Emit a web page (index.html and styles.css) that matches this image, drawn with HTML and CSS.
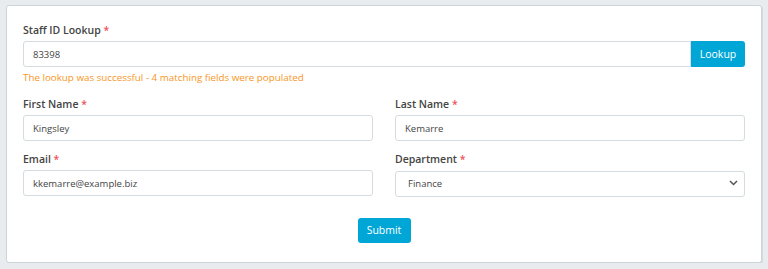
FILE: index.html
```html
<!DOCTYPE html>
<html lang="en">
<head>
    <meta charset="utf-8">
    <title>Staff Lookup</title>
    <link rel="stylesheet" href="styles.css">
</head>
<body>
    <div class="card">
        <form class="staff-form">
            <div class="form-group">
                <label for="staffId">Staff ID Lookup <span class="req">*</span></label>
                <div class="input-group">
                    <input type="text" id="staffId" value="83398">
                    <button type="button" class="btn">Lookup</button>
                </div>
                <div class="lookup-msg">The lookup was successful - 4 matching fields were populated</div>
            </div>
            <div class="form-row">
                <div class="form-group">
                    <label for="firstName">First Name <span class="req">*</span></label>
                    <input type="text" id="firstName" value="Kingsley">
                </div>
                <div class="form-group">
                    <label for="lastName">Last Name <span class="req">*</span></label>
                    <input type="text" id="lastName" value="Kemarre">
                </div>
            </div>
            <div class="form-row">
                <div class="form-group">
                    <label for="email">Email <span class="req">*</span></label>
                    <input type="email" id="email" value="kkemarre@example.biz">
                </div>
                <div class="form-group">
                    <label for="department">Department <span class="req">*</span></label>
                    <div class="select-wrap">
                        <select id="department">
                            <option>Finance</option>
                            <option>Human Resources</option>
                            <option>IT</option>
                        </select>
                        <svg class="chevron" width="9" height="6" viewBox="0 0 9 6"><path d="M1 1l3.5 3.5 3.5-3.5" fill="none" stroke="#555" stroke-width="1.5"/></svg>
                    </div>
                </div>
            </div>
            <div class="form-actions">
                <button type="submit" class="btn">Submit</button>
            </div>
        </form>
    </div>
</body>
</html>
```

FILE: styles.css
```css
body {
    font-family: "Open Sans", Arial, sans-serif;
    background-color: #e8ecef;
    margin: 0;
    padding: 5px 6px 0;
    color: #444;
}
.card {
    background-color: #fff;
    border: 1px solid #cdd4d8;
    border-radius: 3px;
    box-shadow: 1px 1px 0 #d4dade;
    padding: 15px 16px 27px;
    height: 214px;
}
.form-group {
    display: flex;
    flex-direction: column;
    margin-bottom: 9px;
}
.form-group label {
    font-size: 10.5px;
    font-weight: 600;
    line-height: 18px;
    margin-bottom: 2px;
    color: #444;
}
.req {
    color: #f0505a;
}
.form-row {
    display: grid;
    grid-template-columns: 1fr 1fr;
    column-gap: 22px;
}
.form-group input,
.form-group select {
    font-family: inherit;
    font-size: 9.5px;
    color: #444;
    height: 26px;
    box-sizing: border-box;
    border: 1px solid #d5dcdf;
    border-radius: 3px;
    padding: 0 9px;
    background: #fff;
    width: 100%;
}
.input-group {
    display: flex;
}
.input-group input {
    flex: 1;
    border-radius: 3px 0 0 3px;
}
.input-group .btn {
    border-radius: 0 3px 3px 0;
    width: 54px;
    height: 26px;
}
.lookup-msg {
    color: #f8961e;
    font-size: 9.8px;
    line-height: 16px;
    margin-top: 3px;
}
.select-wrap {
    position: relative;
}
.select-wrap select {
    appearance: none;
    padding-left: 12px;
}
.chevron {
    position: absolute;
    right: 7px;
    top: 10px;
    pointer-events: none;
}
.form-actions {
    display: flex;
    justify-content: center;
    margin-top: 12px;
}
.btn {
    background-color: #00a6d6;
    color: #fff;
    border: none;
    border-radius: 3px;
    font-family: inherit;
    font-size: 10.5px;
    padding: 0;
    cursor: pointer;
}
.form-actions .btn {
    width: 53px;
    height: 25px;
}
```
